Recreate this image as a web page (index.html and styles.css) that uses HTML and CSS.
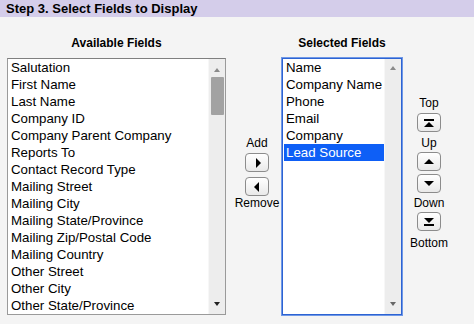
FILE: index.html
```html
<!DOCTYPE html>
<html>
<head>
<meta charset="utf-8">
<link rel="stylesheet" href="styles.css">
</head>
<body>
<div class="header">Step 3. Select Fields to Display</div>
<div class="main">
  <div class="col col-avail">
    <div class="label">Available Fields</div>
    <div class="listbox avail">
      <div class="items">
        <div class="item">Salutation</div>
        <div class="item">First Name</div>
        <div class="item">Last Name</div>
        <div class="item">Company ID</div>
        <div class="item">Company Parent Company</div>
        <div class="item">Reports To</div>
        <div class="item">Contact Record Type</div>
        <div class="item">Mailing Street</div>
        <div class="item">Mailing City</div>
        <div class="item">Mailing State/Province</div>
        <div class="item">Mailing Zip/Postal Code</div>
        <div class="item">Mailing Country</div>
        <div class="item">Other Street</div>
        <div class="item">Other City</div>
        <div class="item">Other State/Province</div>
      </div>
      <div class="scrollbar">
        <span class="arr up"></span>
        <div class="thumb"></div>
        <span class="arr down"></span>
      </div>
    </div>
  </div>
  <div class="col col-move">
    <div class="btnlabel">Add</div>
    <button class="btn first"><span class="tri right"></span></button>
    <button class="btn second"><span class="tri left"></span></button>
    <div class="btnlabel">Remove</div>
  </div>
  <div class="col col-sel">
    <div class="label">Selected Fields</div>
    <div class="listbox sel">
      <div class="items">
        <div class="item">Name</div>
        <div class="item">Company Name</div>
        <div class="item">Phone</div>
        <div class="item">Email</div>
        <div class="item">Company</div>
        <div class="item selected">Lead Source</div>
      </div>
      <div class="scrollbar">
        <span class="arr up"></span>
        <span class="arr down"></span>
      </div>
    </div>
  </div>
  <div class="col col-order">
    <div class="btnlabel">Top</div>
    <button class="btn b-top"><span class="bar"></span><span class="tri upt"></span></button>
    <div class="btnlabel l-up">Up</div>
    <button class="btn b-up"><span class="tri upt"></span></button>
    <button class="btn b-down"><span class="tri downt"></span></button>
    <div class="btnlabel l-down">Down</div>
    <button class="btn b-bottom"><span class="tri downt"></span><span class="bar"></span></button>
    <div class="btnlabel l-bottom">Bottom</div>
  </div>
</div>
</body>
</html>
```
FILE: styles.css
```css
html, body {
  margin: 0;
  padding: 0;
  background: #f4f4f4;
  font-family: "Liberation Sans", Arial, sans-serif;
  color: #000;
  width: 474px;
  height: 324px;
  overflow: hidden;
}
.header {
  height: 17px;
  background: #d4cdea;
  font-weight: bold;
  font-size: 13px;
  line-height: 17px;
  padding-left: 6px;
}
.main {
  display: flex;
  padding-left: 7px;
}
.col {
  display: flex;
  flex-direction: column;
}
.label {
  margin-top: 19px;
  height: 14px;
  line-height: 14px;
  font-size: 12px;
  font-weight: bold;
  text-align: center;
  margin-bottom: 8px;
}
.col-avail { width: 219px; }
.col-sel { width: 120px; }
.col-move {
  width: 50px;
  margin-left: 6px;
  align-items: center;
  padding-top: 119px;
}
.col-order {
  width: 50px;
  margin-left: 2px;
  align-items: center;
  padding-top: 79px;
}
.listbox {
  height: 257px;
  box-sizing: border-box;
  background: #fff;
  display: flex;
  position: relative;
}
.listbox.avail {
  border: 1px solid #9a9a9a;
  border-top-color: #7f7f7f;
}
.listbox.sel {
  border: 1px solid #2d63d3;
  box-shadow: 0 0 0 1px #6f98e6;
}
.items {
  flex: 1;
  font-size: 13.3px;
  overflow: hidden;
}
.item {
  height: 17px;
  line-height: 17px;
  padding-left: 3px;
  white-space: nowrap;
}
.sel .items { padding-left: 1px; }
.sel .item { padding-left: 2px; }
.item.selected {
  background: #0e5ff6;
  color: #fff;
}
.scrollbar {
  width: 16px;
  background: #ededed;
  border-left: 1px solid #f7f7f7;
  position: relative;
}
.thumb {
  position: absolute;
  left: 2px;
  right: 1px;
  top: 18px;
  height: 38px;
  background: #a2a2a2;
  border-radius: 1px;
}
.arr {
  position: absolute;
  left: 5px;
  width: 0;
  height: 0;
  border-left: 3px solid transparent;
  border-right: 3px solid transparent;
}
.arr.up {
  top: 9px;
  border-bottom: 4px solid #8a8a8a;
}
.arr.down {
  bottom: 8px;
  border-top: 4px solid #222;
}
.sel .arr.up { top: 7px; }
.sel .arr.down { bottom: 8px; border-top-color: #666; }
.btnlabel {
  font-size: 12px;
  line-height: 14px;
  height: 14px;
  white-space: nowrap;
}
.btn {
  width: 24px;
  height: 19px;
  padding: 0;
  box-sizing: border-box;
  border: 1px solid #8c8c8c;
  border-radius: 4px;
  background: linear-gradient(#ffffff, #e9e9e9);
  display: flex;
  flex-direction: column;
  align-items: center;
  justify-content: center;
  gap: 1px;
}
.col-move .btn.first { margin-top: 3px; }
.col-move .btn.second { margin-top: 5px; }
.b-top { margin-top: 3px; }
.l-up { margin-top: 4px; }
.b-up { margin-top: 2px; }
.b-down { margin-top: 3px; }
.l-down { margin-top: 3px; }
.b-bottom { margin-top: 2px; }
.l-bottom { margin-top: 5px; }
.tri {
  width: 0;
  height: 0;
  display: block;
}
.tri.right {
  border-top: 5px solid transparent;
  border-bottom: 5px solid transparent;
  border-left: 5px solid #000;
  margin-left: 2px;
}
.tri.left {
  border-top: 5px solid transparent;
  border-bottom: 5px solid transparent;
  border-right: 5px solid #000;
  margin-right: 2px;
}
.tri.upt {
  border-left: 5px solid transparent;
  border-right: 5px solid transparent;
  border-bottom: 5px solid #000;
}
.tri.downt {
  border-left: 5px solid transparent;
  border-right: 5px solid transparent;
  border-top: 5px solid #000;
}
.bar {
  display: block;
  width: 10px;
  height: 2px;
  background: #000;
}
```
